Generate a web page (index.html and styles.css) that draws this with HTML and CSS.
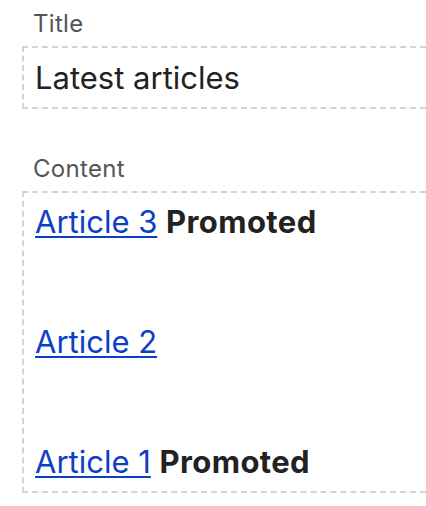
FILE: index.html
```html
<!DOCTYPE html>
<html>
<head>
<meta charset="utf-8">
<link rel="stylesheet" href="styles.css">
</head>
<body>
<div class="form">
  <div class="field">
    <div class="label">Title</div>
    <div class="box title-box">Latest articles</div>
  </div>
  <div class="field">
    <div class="label">Content</div>
    <div class="box content-box">
      <div class="item"><a href="#">Article 3</a> <strong>Promoted</strong></div>
      <div class="item"><a href="#">Article 2</a></div>
      <div class="item"><a href="#">Article 1</a> <strong>Promoted</strong></div>
    </div>
  </div>
</div>
</body>
</html>
```

FILE: styles.css
```css
html, body {
  margin: 0;
  padding: 0;
  background: #fff;
}
body {
  font-family: Inter, "Noto Sans", sans-serif;
  color: #222;
}
.form {
  padding: 8px 0 0 22px;
  display: flex;
  flex-direction: column;
  gap: 44px;
}
.label {
  font-size: 24px;
  letter-spacing: 0.3px;
  line-height: 32px;
  color: #555;
  padding-left: 11px;
  margin-bottom: 6px;
}
.box {
  border: 2px dashed #d4d4d4;
  border-right: none;
  padding: 0 11px;
  font-size: 31px;
}
.title-box {
  line-height: 36px;
  padding-top: 12px;
  padding-bottom: 11px;
}
.content-box {
  display: flex;
  flex-direction: column;
  gap: 84px;
  padding-top: 11px;
  padding-bottom: 11px;
  line-height: 36px;
}
.item a {
  color: #0b3fc8;
  text-decoration: underline;
  text-decoration-thickness: 2px;
  text-underline-offset: 3px;
}
.item strong {
  font-weight: 700;
  letter-spacing: 0.4px;
  color: #222;
}
```
